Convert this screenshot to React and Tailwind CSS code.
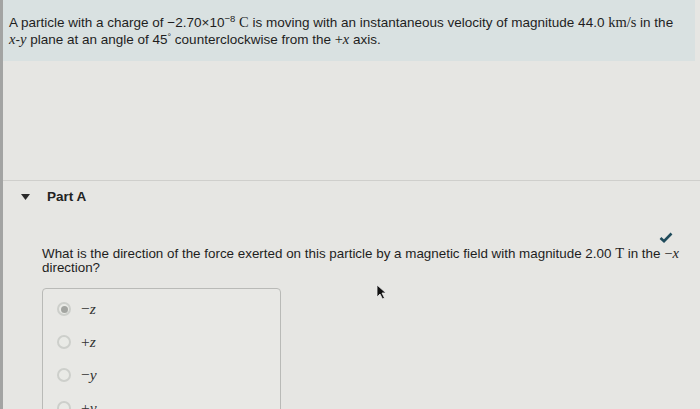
import React from "react";

const M = ({ children, i = true }) => (
  <span className={`font-['Liberation_Serif',serif] text-[14.5px] ${i ? "italic" : ""}`}>{children}</span>
);

function Radio({ checked }) {
  return (
    <span className="w-[14px] h-[14px] rounded-full border-2 border-[#cdcfcb] bg-[#e9eae6] flex items-center justify-center shrink-0">
      {checked && <span className="w-[7px] h-[7px] rounded-full bg-[#a3a5a1]" />}
    </span>
  );
}

export default function App() {
  const opts = [
    { sign: "−", v: "z", checked: true },
    { sign: "+", v: "z" },
    { sign: "−", v: "y" },
    { sign: "+", v: "y" },
  ];
  return (
    <div className="relative w-[700px] h-[409px] overflow-hidden bg-[#e6e6e3] flex font-['Liberation_Sans',Arial,sans-serif] text-[#1e1e1e]">
      <div className="w-[3px] bg-[#a3a4a3] shrink-0" />
      <div className="flex-1 flex flex-col min-h-0">
        <div className="shrink-0 h-[61px] mr-[5px] bg-[#d9e1e1] pl-[6px] pt-[14px] text-[13.5px] leading-[16px]">
          <p>
            A particle with a charge of −2.70×10<sup className="text-[9.5px]">−8</sup> <M i={false}>C</M> is moving with an instantaneous velocity of magnitude 44.0 <M i={false}>km/s</M> in the
          </p>
          <p>
            <M>x</M>-<M>y</M> plane at an angle of 45<sup className="text-[9px]">°</sup> counterclockwise from the <M i={false}>+</M><M>x</M> axis.
          </p>
        </div>
        <div className="shrink-0 h-[119px]" />
        <div className="shrink-0 border-t border-[#cfcfcc]" />
        <div className="shrink-0 flex items-center h-[32px] pl-[18px]">
          <svg width="9" height="6" viewBox="0 0 9 6" className="mr-[17px]">
            <polygon points="0,0 9,0 4.5,6" fill="#2a2a2a" />
          </svg>
          <span className="text-[13.5px] font-bold text-[#222]">Part A</span>
        </div>
        <div className="shrink-0 h-[33px]" />
        <div className="shrink-0 relative pl-[39px] pr-[12px] text-[13.4px] leading-[14px]">
          <svg width="14" height="11" viewBox="0 0 14 11" className="absolute right-[27px] top-[-14px]">
            <path d="M1.5 6 L5 9.2 L12.5 1.5" stroke="#1f4b5b" strokeWidth="2.6" fill="none" />
          </svg>
          <p>
            What is the direction of the force exerted on this particle by a magnetic field with magnitude 2.00 <M i={false}>T</M> in the <M i={false}>−</M><M>x</M>
          </p>
          <p>direction?</p>
        </div>
        <div className="shrink-0 h-[13px]" />
        <div className="shrink-0 ml-[39px] w-[239px] h-[140px] border border-[#b9bab7] rounded-[4px] bg-[#e8e8e5] pt-[13px] pl-[14px] flex flex-col gap-[19px]">
          {opts.map((o, i) => (
            <div key={i} className="flex items-center gap-[10px] h-[14px] text-[#333]">
              <Radio checked={o.checked} />
              <span className="font-['Liberation_Serif',serif] text-[15.5px]">
                {o.sign}<span className="italic">{o.v}</span>
              </span>
            </div>
          ))}
        </div>
      </div>
      <svg width="12" height="16" viewBox="0 0 12 16" className="absolute left-[376px] top-[284px]">
        <path d="M1 1 L1 13 L4 10 L6.5 15 L8.5 14 L6 9 L10 9 Z" fill="#111" stroke="#eee" strokeWidth="0.8" />
      </svg>
    </div>
  );
}
